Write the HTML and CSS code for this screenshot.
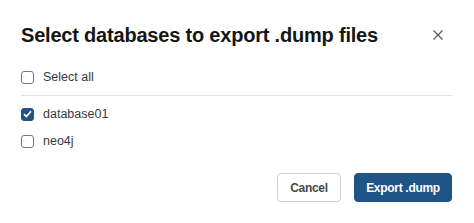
FILE: index.html
```html
<!DOCTYPE html>
<html lang="en">
<head>
  <meta charset="UTF-8">
  <title>Export databases</title>
  <link rel="stylesheet" href="styles.css">
</head>
<body>
  <div class="dialog">
    <div class="header">
      <h1>Select databases to export .dump files</h1>
      <button class="close-button" aria-label="Close">
        <svg width="10" height="10" viewBox="0 0 10 10">
          <path d="M0.5 0.5 L9.5 9.5 M9.5 0.5 L0.5 9.5" stroke="#5a5a5a" stroke-width="1.3" fill="none"/>
        </svg>
      </button>
    </div>

    <label class="option select-all">
      <span class="checkbox"></span>
      <span>Select all</span>
    </label>

    <div class="db-list">
      <label class="option">
        <span class="checkbox checked">
          <svg width="9" height="8" viewBox="0 0 9 8">
            <path d="M1 4.2 L3.4 6.5 L8 1.2" stroke="#fff" stroke-width="1.7" fill="none"/>
          </svg>
        </span>
        <span>database01</span>
      </label>
      <label class="option">
        <span class="checkbox"></span>
        <span>neo4j</span>
      </label>
    </div>

    <div class="footer">
      <button class="button button-secondary">Cancel</button>
      <button class="button button-primary">Export .dump</button>
    </div>
  </div>
</body>
</html>
```

FILE: styles.css
```css
body {
  margin: 0;
  background-color: #fff;
  font-family: 'Liberation Sans', Arial, sans-serif;
  color: #333;
}

.dialog {
  padding: 23px 22px 0 21px;
}

.header {
  display: flex;
  align-items: center;
  justify-content: space-between;
  height: 24px;
}

.header h1 {
  margin: 0;
  font-size: 20px;
  line-height: 24px;
  font-weight: bold;
  letter-spacing: -0.2px;
  color: #151515;
}

.close-button {
  display: flex;
  padding: 0;
  margin-right: 9px;
  border: none;
  background: none;
  cursor: pointer;
}

.option {
  display: flex;
  align-items: center;
  height: 20px;
  font-size: 12.5px;
  color: #3a3a3a;
}

.select-all {
  margin-top: 20px;
  padding-bottom: 8px;
  border-bottom: 1px solid #e2e2e2;
}

.db-list {
  display: flex;
  flex-direction: column;
  gap: 7px;
  margin-top: 8px;
}

.checkbox {
  display: flex;
  align-items: center;
  justify-content: center;
  box-sizing: border-box;
  width: 13px;
  height: 13px;
  margin-right: 9px;
  border: 1.5px solid #767676;
  border-radius: 3px;
}

.checkbox.checked {
  background-color: #1f5486;
  border-color: #1f5486;
}

.footer {
  display: flex;
  justify-content: flex-end;
  gap: 13px;
  margin-top: 22px;
}

.button {
  height: 29px;
  padding: 0;
  border-radius: 4px;
  font-family: 'Liberation Sans', Arial, sans-serif;
  font-size: 12px;
  font-weight: bold;
  letter-spacing: -0.3px;
  white-space: nowrap;
  cursor: pointer;
}

.button-secondary {
  width: 64px;
  background-color: #fff;
  color: #4a4a4a;
  border: 1px solid #cfcfcf;
}

.button-primary {
  width: 98px;
  background-color: #1f5486;
  color: #fff;
  border: 1px solid #1f5486;
}
```
